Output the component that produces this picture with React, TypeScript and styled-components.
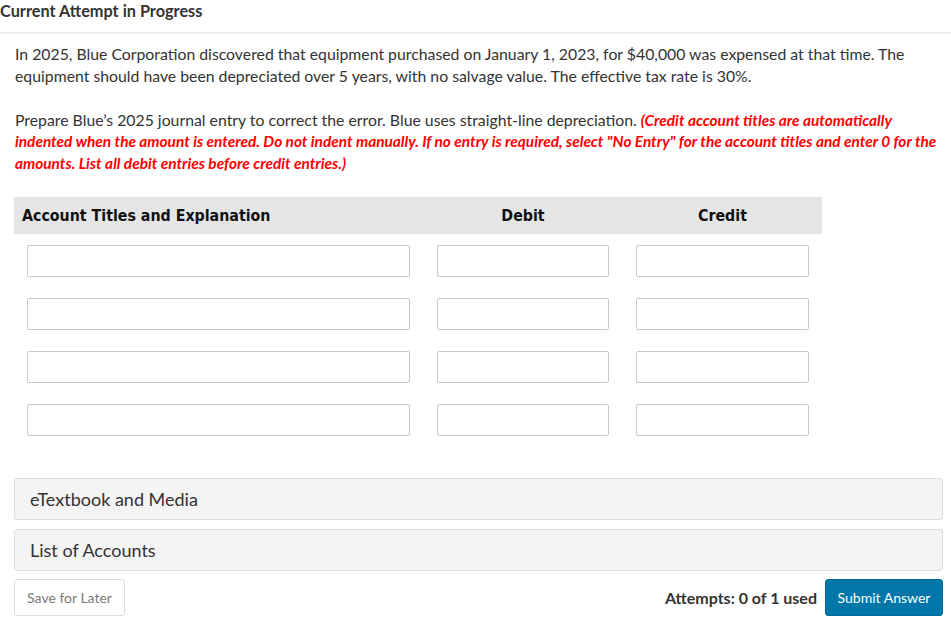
import React from "react";
import styled, { createGlobalStyle } from "styled-components";

const Global = createGlobalStyle`
  html, body { margin: 0; padding: 0; background: #fff; }
  body {
    font-family: Lato, "Open Sans", sans-serif;
    color: #333;
  }
  * { box-sizing: border-box; }
`;

const Page = styled.div`
  width: 951px;
  display: flex;
  flex-direction: column;
`;

const TopBar = styled.div`
  height: 34px;
  border-bottom: 2px solid #ececec;
  padding: 1px 0 0 0;
  font-weight: 700;
  font-size: 16.3px;
  line-height: 20px;
  color: #333;
`;

const Body = styled.div`
  padding: 9px 8px 0 14px;
  display: flex;
  flex-direction: column;
`;

const Para = styled.p`
  margin: 0 0 22px 1px;
  font-size: 15.8px;
  line-height: 21.8px;
  color: #333;
`;

const Red = styled.em`
  color: #ff0000;
  font-weight: 700;
  font-style: italic;
  font-size: 15.4px;
  line-height: 19px;
`;

const Table = styled.table`
  width: 808px;
  border-collapse: collapse;
  margin-top: 1px;
`;

const Th = styled.th<{ $align?: string; $w: number }>`
  background: #e5e5e5;
  height: 37px;
  width: ${(p) => p.$w}px;
  padding: 0 8px;
  text-align: ${(p) => p.$align || "center"};
  font-family: "DejaVu Sans Condensed", "DejaVu Sans", sans-serif;
  font-weight: 700;
  font-size: 15.8px;
  color: #111;
`;

const Td = styled.td<{ $pad: number }>`
  padding: 11px ${(p) => p.$pad}px 10px ${(p) => p.$pad}px;
`;

const Field = styled.input`
  display: block;
  width: 100%;
  height: 32px;
  border: 1px solid #c8c8c8;
  border-radius: 2px;
  background: #fff;
  outline: none;
`;

const Panels = styled.div`
  margin-top: 32px;
  display: flex;
  flex-direction: column;
  gap: 9px;
`;

const Panel = styled.div`
  height: 42px;
  background: #f4f4f4;
  border: 1px solid #dcdcdc;
  border-radius: 3px;
  padding: 0 15px;
  display: flex;
  align-items: center;
  font-size: 18px;
  color: #333;
`;

const Footer = styled.div`
  margin-top: 8px;
  display: flex;
  align-items: center;
`;

const SaveBtn = styled.button`
  height: 37px;
  width: 111px;
  background: #fff;
  border: 1px solid #dcdcdc;
  border-radius: 3px;
  font-family: Lato, sans-serif;
  font-size: 14px;
  color: #7a7a7a;
`;

const Spacer = styled.div`
  flex: 1;
`;

const Attempts = styled.span`
  font-size: 16px;
  font-weight: 700;
  color: #333;
  margin-right: 8px;
`;

const SubmitBtn = styled.button`
  height: 37px;
  width: 118px;
  background: #0077a8;
  border: 1px solid #006a96;
  border-radius: 3px;
  font-family: Lato, sans-serif;
  font-size: 14px;
  color: #fff;
`;

const rows = [0, 1, 2, 3];

export default function App() {
  return (
    <Page>
      <Global />
      <TopBar>Current Attempt in Progress</TopBar>
      <Body>
        <Para>
          In 2025, Blue Corporation discovered that equipment purchased on January 1, 2023, for $40,000 was expensed at that time. The equipment should have been depreciated over 5 years, with no salvage value. The effective tax rate is 30%.
        </Para>
        <Para>
          Prepare Blue’s 2025 journal entry to correct the error. Blue uses straight-line depreciation.{" "}
          <Red>
            (Credit account titles are automatically indented when the amount is entered. Do not indent manually. If no entry is required, select "No Entry" for the account titles and enter 0 for the amounts. List all debit entries before credit entries.)
          </Red>
        </Para>
        <Table>
          <thead>
            <tr>
              <Th $w={409} $align="left">Account Titles and Explanation</Th>
              <Th $w={200}>Debit</Th>
              <Th $w={199}>Credit</Th>
            </tr>
          </thead>
          <tbody>
            {rows.map((r) => (
              <tr key={r}>
                <Td $pad={13}><Field type="text" /></Td>
                <Td $pad={14}><Field type="text" /></Td>
                <Td $pad={13}><Field type="text" /></Td>
              </tr>
            ))}
          </tbody>
        </Table>
        <Panels>
          <Panel>eTextbook and Media</Panel>
          <Panel>List of Accounts</Panel>
        </Panels>
        <Footer>
          <SaveBtn>Save for Later</SaveBtn>
          <Spacer />
          <Attempts>Attempts: 0 of 1 used</Attempts>
          <SubmitBtn>Submit Answer</SubmitBtn>
        </Footer>
      </Body>
    </Page>
  );
}
